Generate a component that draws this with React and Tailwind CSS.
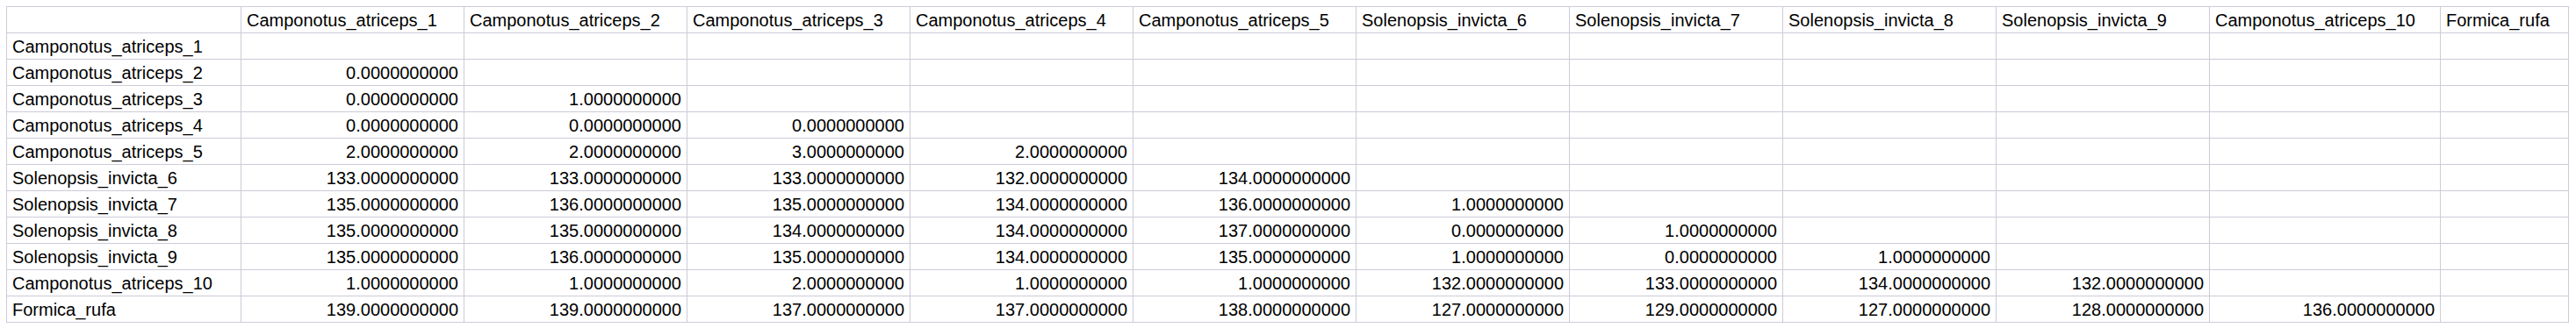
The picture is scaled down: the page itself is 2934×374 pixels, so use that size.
import React from 'react';

const names = [
  'Camponotus_atriceps_1',
  'Camponotus_atriceps_2',
  'Camponotus_atriceps_3',
  'Camponotus_atriceps_4',
  'Camponotus_atriceps_5',
  'Solenopsis_invicta_6',
  'Solenopsis_invicta_7',
  'Solenopsis_invicta_8',
  'Solenopsis_invicta_9',
  'Camponotus_atriceps_10',
  'Formica_rufa',
];

// lower triangle of the distance matrix
const dist = [
  [],
  [0],
  [0, 1],
  [0, 0, 0],
  [2, 2, 3, 2],
  [133, 133, 133, 132, 134],
  [135, 136, 135, 134, 136, 1],
  [135, 135, 134, 134, 137, 0, 1],
  [135, 136, 135, 134, 135, 1, 0, 1],
  [1, 1, 2, 1, 1, 132, 133, 134, 132],
  [139, 139, 137, 137, 138, 127, 129, 127, 128, 136],
];

const widths = ['w-[267px]', 'w-[254px]', 'w-[254px]', 'w-[254px]', 'w-[254px]', 'w-[254px]', 'w-[243px]', 'w-[243px]', 'w-[243px]', 'w-[243px]', 'w-[263px]', 'w-[146px]'];

export default function App() {
  return (
    <div className="min-h-screen bg-white pt-[7px] pl-[7px]" style={{ fontFamily: '"Liberation Sans", Arial, sans-serif' }}>
      <table className="table-fixed border-collapse w-[2918px] text-[20px] leading-[24px] text-black">
        <colgroup>
          {widths.map((w, i) => (
            <col key={i} className={w} />
          ))}
        </colgroup>
        <thead>
          <tr className="h-[30px]">
            <th className="border border-[#cdcbd9] px-[6px] font-normal text-left"></th>
            {names.map((n) => (
              <th key={n} className="border border-[#cdcbd9] px-[6px] font-normal text-left whitespace-nowrap">
                {n}
              </th>
            ))}
          </tr>
        </thead>
        <tbody>
          {names.map((n, r) => (
            <tr key={n} className="h-[30px]">
              <td className="border border-[#cdcbd9] px-[6px] whitespace-nowrap">{n}</td>
              {names.map((_, c) => (
                <td key={c} className="border border-[#cdcbd9] px-[6px] text-right whitespace-nowrap">
                  {c < r ? dist[r][c].toFixed(10) : ''}
                </td>
              ))}
            </tr>
          ))}
        </tbody>
      </table>
    </div>
  );
}
